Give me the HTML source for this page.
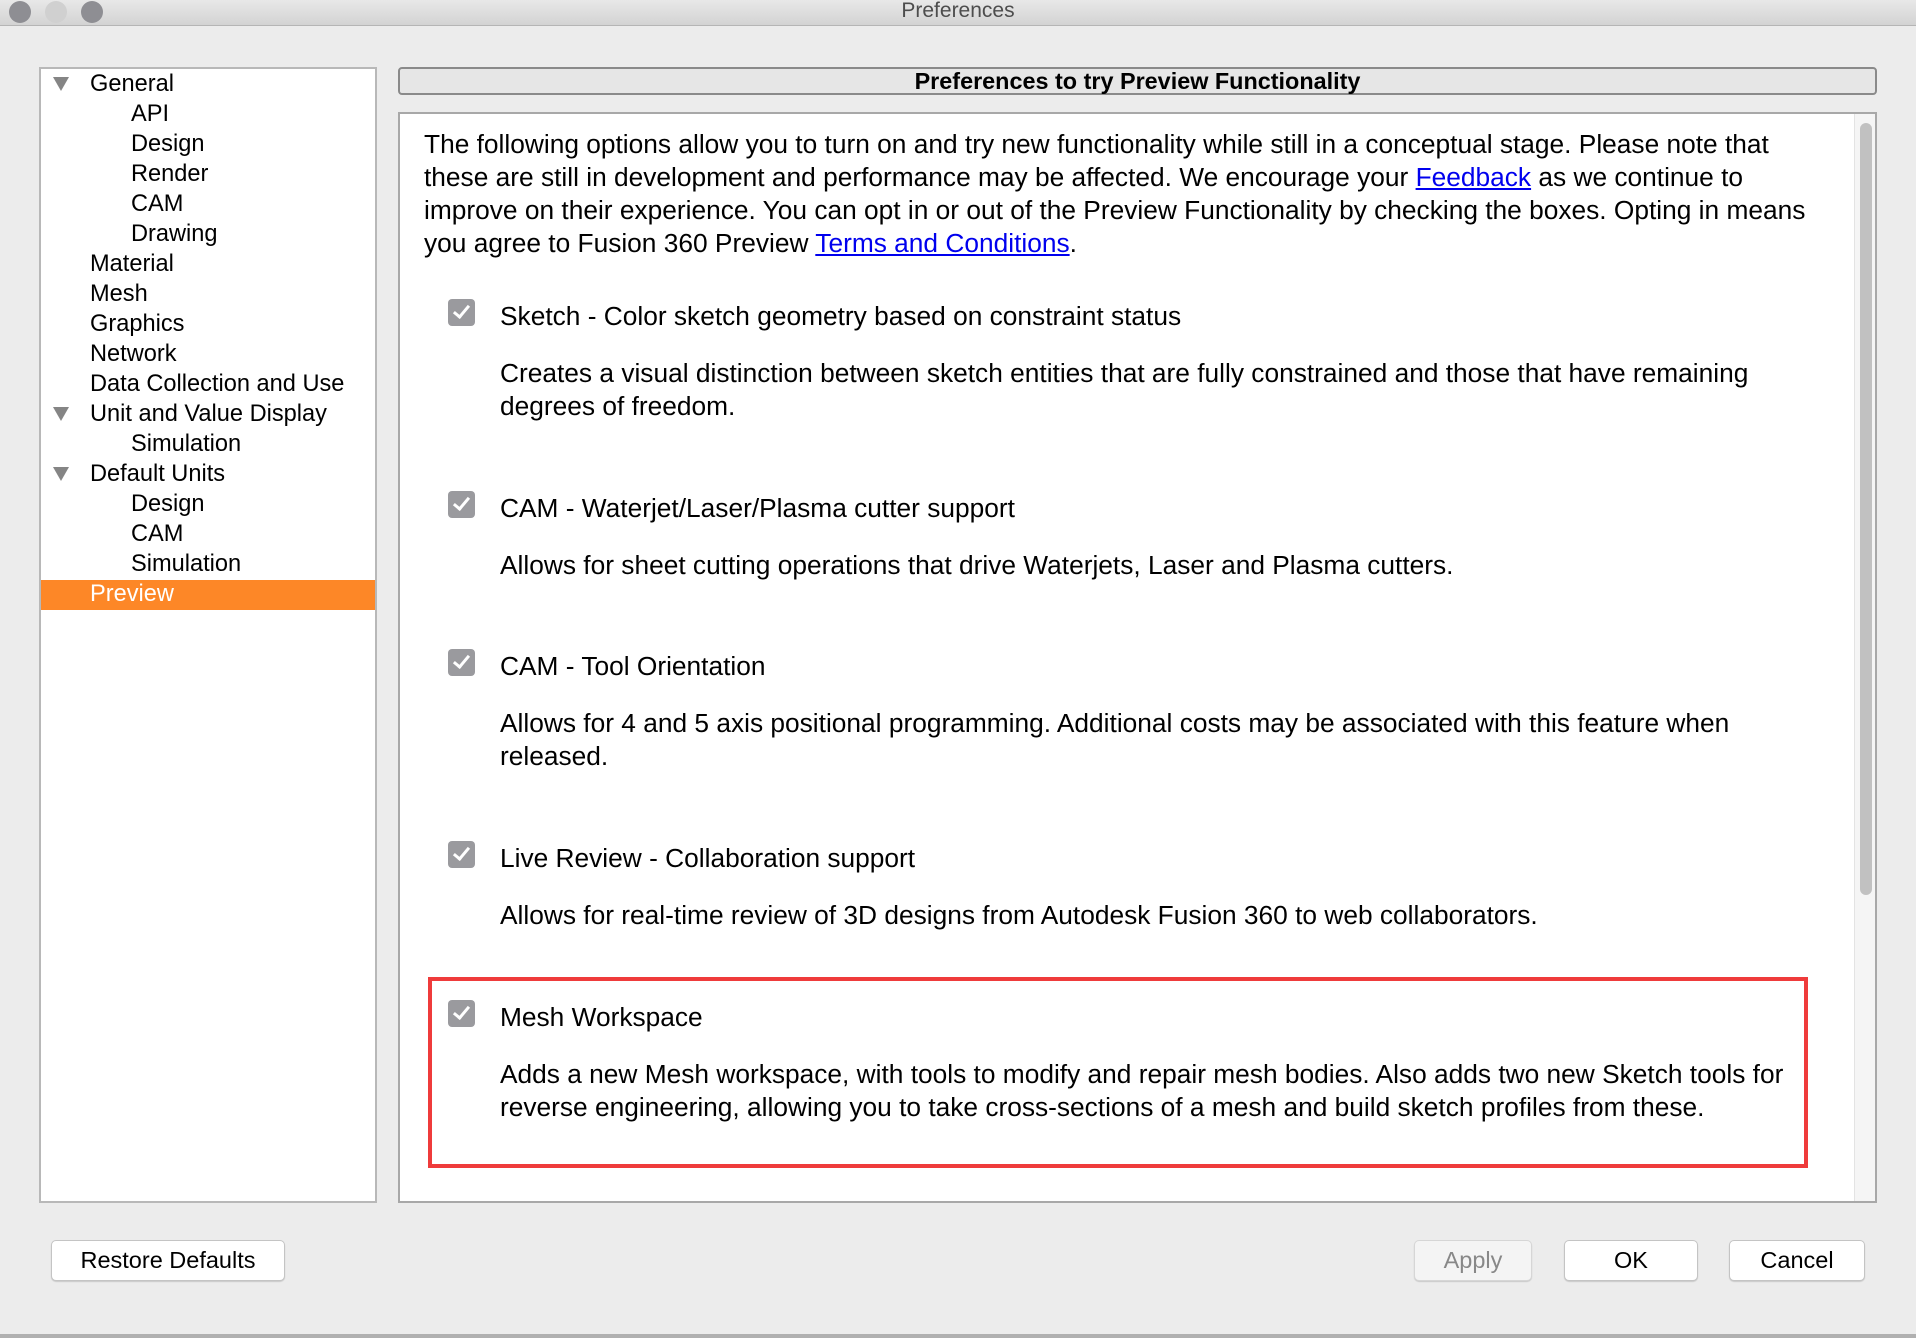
<!DOCTYPE html>
<html><head><meta charset="utf-8"><style>
*{margin:0;padding:0;box-sizing:border-box}
body{width:1916px;height:1338px;background:#ececec;font-family:"Liberation Sans",sans-serif;position:relative;overflow:hidden;color:#000}
.a{position:absolute}
.title{left:0;top:0;width:1916px;height:26px;background:linear-gradient(#e8e8e8,#d3d3d3);border-bottom:1px solid #b5b5b5;text-align:center;font-size:21px;line-height:22px;color:#4d4d4d}
.dot{top:1px;width:22px;height:22px;border-radius:50%;background:#8e8e93}
.tree{left:39px;top:67px;width:338px;height:1136px;background:#fff;border:2px solid #b8b8b8}
.ti{position:absolute;font-size:23.6px;line-height:30px;white-space:nowrap}
.tri{position:absolute;width:0;height:0;border-left:8px solid transparent;border-right:8px solid transparent;border-top:14px solid #858585}
.hdr{left:398px;top:67px;width:1479px;height:28px;background:#e6e6e6;border:2px solid #8a8a8a;border-radius:4px;text-align:center;font-weight:bold;font-size:23.4px;line-height:25px}
.box{left:398px;top:112px;width:1479px;height:1091px;background:#fff;border:2px solid #a8a8a8}
.sb{left:1854px;top:114px;width:21px;height:1087px;background:#f5f5f5;border-left:1px solid #e3e3e3}
.thumb{left:1860px;top:123px;width:12px;height:772px;background:#c1c1c1;border-radius:6px}
.t{position:absolute;font-size:26.3px;line-height:33px;white-space:nowrap}
a{color:#0000ee;text-decoration:underline}
.cb{position:absolute;left:448px;width:27px;height:27px;background:#9a9a9e;border-radius:4px}
.cb:after{content:"";position:absolute;left:9px;top:3px;width:6px;height:13px;border-right:3px solid #fff;border-bottom:3px solid #fff;transform:rotate(40deg)}
.red{left:428px;top:977px;width:1380px;height:191px;border:4px solid #ef3b3b}
.btn{position:absolute;top:1240px;height:41px;background:#fff;border:1px solid #c4c4c4;border-radius:5px;text-align:center;font-size:23.5px;line-height:39px;box-shadow:0 1px 1px rgba(0,0,0,.15)}
</style></head><body>
<div class="a title">Preferences</div>
<div class="a dot" style="left:9px"></div>
<div class="a dot" style="left:45px;background:#d0d0d0"></div>
<div class="a dot" style="left:81px"></div>

<div class="a tree"></div>
<div class="a" style="left:41px;top:580px;width:334px;height:30px;background:#fd8727"></div>
<div class="tri" style="left:53px;top:77px"></div>
<div class="tri" style="left:53px;top:407px"></div>
<div class="tri" style="left:53px;top:467px"></div>
<div class="ti" style="left:90px;top:69px">General</div>
<div class="ti" style="left:131px;top:99px">API</div>
<div class="ti" style="left:131px;top:129px">Design</div>
<div class="ti" style="left:131px;top:159px">Render</div>
<div class="ti" style="left:131px;top:189px">CAM</div>
<div class="ti" style="left:131px;top:219px">Drawing</div>
<div class="ti" style="left:90px;top:249px">Material</div>
<div class="ti" style="left:90px;top:279px">Mesh</div>
<div class="ti" style="left:90px;top:309px">Graphics</div>
<div class="ti" style="left:90px;top:339px">Network</div>
<div class="ti" style="left:90px;top:369px">Data Collection and Use</div>
<div class="ti" style="left:90px;top:399px">Unit and Value Display</div>
<div class="ti" style="left:131px;top:429px">Simulation</div>
<div class="ti" style="left:90px;top:459px">Default Units</div>
<div class="ti" style="left:131px;top:489px">Design</div>
<div class="ti" style="left:131px;top:519px">CAM</div>
<div class="ti" style="left:131px;top:549px">Simulation</div>
<div class="ti" style="left:90px;top:579px;color:#fff">Preview</div>

<div class="a hdr">Preferences to try Preview Functionality</div>
<div class="a box"></div>
<div class="a sb"></div>
<div class="a thumb"></div>

<div class="t" style="left:424px;top:128px">The following options allow you to turn on and try new functionality while still in a conceptual stage. Please note that<br>these are still in development and performance may be affected. We encourage your <a>Feedback</a> as we continue to<br>improve on their experience. You can opt in or out of the Preview Functionality by checking the boxes. Opting in means<br>you agree to Fusion 360 Preview <a>Terms and Conditions</a>.</div>

<div class="cb" style="top:299px"></div>
<div class="t" style="left:500px;top:300px">Sketch - Color sketch geometry based on constraint status</div>
<div class="t" style="left:500px;top:357px">Creates a visual distinction between sketch entities that are fully constrained and those that have remaining<br>degrees of freedom.</div>

<div class="cb" style="top:491px"></div>
<div class="t" style="left:500px;top:492px">CAM - Waterjet/Laser/Plasma cutter support</div>
<div class="t" style="left:500px;top:549px">Allows for sheet cutting operations that drive Waterjets, Laser and Plasma cutters.</div>

<div class="cb" style="top:649px"></div>
<div class="t" style="left:500px;top:650px">CAM - Tool Orientation</div>
<div class="t" style="left:500px;top:707px">Allows for 4 and 5 axis positional programming. Additional costs may be associated with this feature when<br>released.</div>

<div class="cb" style="top:841px"></div>
<div class="t" style="left:500px;top:842px">Live Review - Collaboration support</div>
<div class="t" style="left:500px;top:899px">Allows for real-time review of 3D designs from Autodesk Fusion 360 to web collaborators.</div>

<div class="a red"></div>
<div class="cb" style="top:1000px"></div>
<div class="t" style="left:500px;top:1001px">Mesh Workspace</div>
<div class="t" style="left:500px;top:1058px">Adds a new Mesh workspace, with tools to modify and repair mesh bodies. Also adds two new Sketch tools for<br>reverse engineering, allowing you to take cross-sections of a mesh and build sketch profiles from these.</div>

<div class="btn" style="left:51px;width:234px">Restore Defaults</div>
<div class="btn" style="left:1414px;width:118px;background:#f4f4f4;color:#888;border-color:#d6d6d6">Apply</div>
<div class="btn" style="left:1564px;width:134px">OK</div>
<div class="btn" style="left:1729px;width:136px">Cancel</div>
<div class="a" style="left:0;top:1334px;width:1916px;height:4px;background:#b0b0b0"></div>
</body></html>
